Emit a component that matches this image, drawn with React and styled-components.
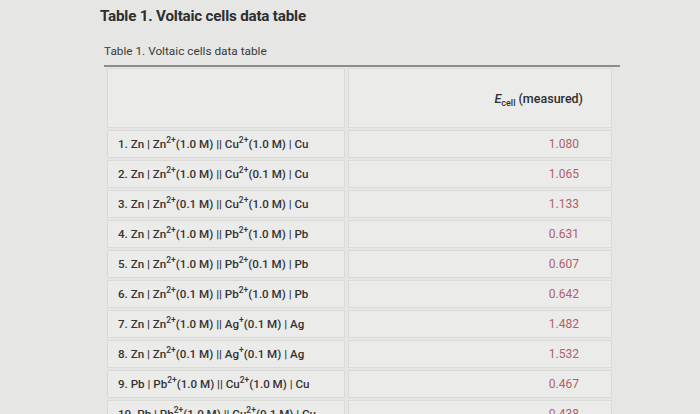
import React from "react";
import styled, { createGlobalStyle } from "styled-components";

const Global = createGlobalStyle`
  html, body { margin: 0; padding: 0; }
  body {
    background: #e6e6e4;
    font-family: Roboto, "Liberation Sans", Arial, sans-serif;
    color: #333;
    width: 700px;
    height: 414px;
    overflow: hidden;
  }
`;

const Page = styled.div`
  padding: 5px 0 0 100px;
  display: flex;
  flex-direction: column;
`;

const Title = styled.h1`
  margin: 0;
  font-size: 15.2px;
  font-weight: 700;
  letter-spacing: -0.2px;
  color: #2e2e2e;
  line-height: 22px;
`;

const Caption = styled.div`
  margin: 16px 0 0 4px;
  width: 516px;
  font-size: 11.8px;
  color: #3a3a3a;
  line-height: 16px;
  padding-bottom: 6px;
  border-bottom: 2px solid #8c8c8a;
`;

const Grid = styled.div`
  margin: 1px 0 0 7px;
  display: grid;
  grid-template-columns: 238px 264px;
  column-gap: 3px;
  row-gap: 2px;
`;

const Cell = styled.div`
  background: #ebebe9;
  border: 1px solid #dadad8;
  box-sizing: border-box;
  height: ${(p) => (p.$head ? "60px" : "28px")};
  display: flex;
  align-items: center;
  justify-content: ${(p) => (p.$right ? "flex-end" : "flex-start")};
  padding: ${(p) => (p.$right ? "0 32px 0 0" : "0 0 0 10px")};
  font-size: 11.6px;
`;

const HeadText = styled.span`
  font-size: 12.5px;
  font-weight: 500;
  color: #2e2e2e;
  margin-right: -4px;
`;

const Ital = styled.i`
  font-style: italic;
`;

const Sub = styled.sub`
  font-size: 9px;
  vertical-align: -3px;
  line-height: 0;
`;

const Sup = styled.sup`
  font-size: 8.5px;
  vertical-align: 5px;
  line-height: 0;
`;

const CellText = styled.span`
  font-weight: 500;
  color: #333;
  white-space: nowrap;
`;

const Value = styled.span`
  color: #b2606a;
  font-size: 12px;
`;

const rows = [
  ["1. Zn | Zn", "2+", "(1.0 M) || Cu", "2+", "(1.0 M) | Cu", "1.080"],
  ["2. Zn | Zn", "2+", "(1.0 M) || Cu", "2+", "(0.1 M) | Cu", "1.065"],
  ["3. Zn | Zn", "2+", "(0.1 M) || Cu", "2+", "(1.0 M) | Cu", "1.133"],
  ["4. Zn | Zn", "2+", "(1.0 M) || Pb", "2+", "(1.0 M) | Pb", "0.631"],
  ["5. Zn | Zn", "2+", "(1.0 M) || Pb", "2+", "(0.1 M) | Pb", "0.607"],
  ["6. Zn | Zn", "2+", "(0.1 M) || Pb", "2+", "(1.0 M) | Pb", "0.642"],
  ["7. Zn | Zn", "2+", "(1.0 M) || Ag", "+", "(0.1 M) | Ag", "1.482"],
  ["8. Zn | Zn", "2+", "(0.1 M) || Ag", "+", "(0.1 M) | Ag", "1.532"],
  ["9. Pb | Pb", "2+", "(1.0 M) || Cu", "2+", "(1.0 M) | Cu", "0.467"],
  ["10. Pb | Pb", "2+", "(1.0 M) || Cu", "2+", "(0.1 M) | Cu", "0.438"],
];

export default function App() {
  return (
    <>
      <Global />
      <Page>
        <Title>Table 1. Voltaic cells data table</Title>
        <Caption>Table 1. Voltaic cells data table</Caption>
        <Grid>
          <Cell $head />
          <Cell $head $right>
            <HeadText>
              <Ital>E</Ital>
              <Sub>cell</Sub> (measured)
            </HeadText>
          </Cell>
          {rows.map((r, i) => (
            <React.Fragment key={i}>
              <Cell>
                <CellText>
                  {r[0]}
                  <Sup>{r[1]}</Sup>
                  {r[2]}
                  <Sup>{r[3]}</Sup>
                  {r[4]}
                </CellText>
              </Cell>
              <Cell $right>
                <Value>{r[5]}</Value>
              </Cell>
            </React.Fragment>
          ))}
        </Grid>
      </Page>
    </>
  );
}
